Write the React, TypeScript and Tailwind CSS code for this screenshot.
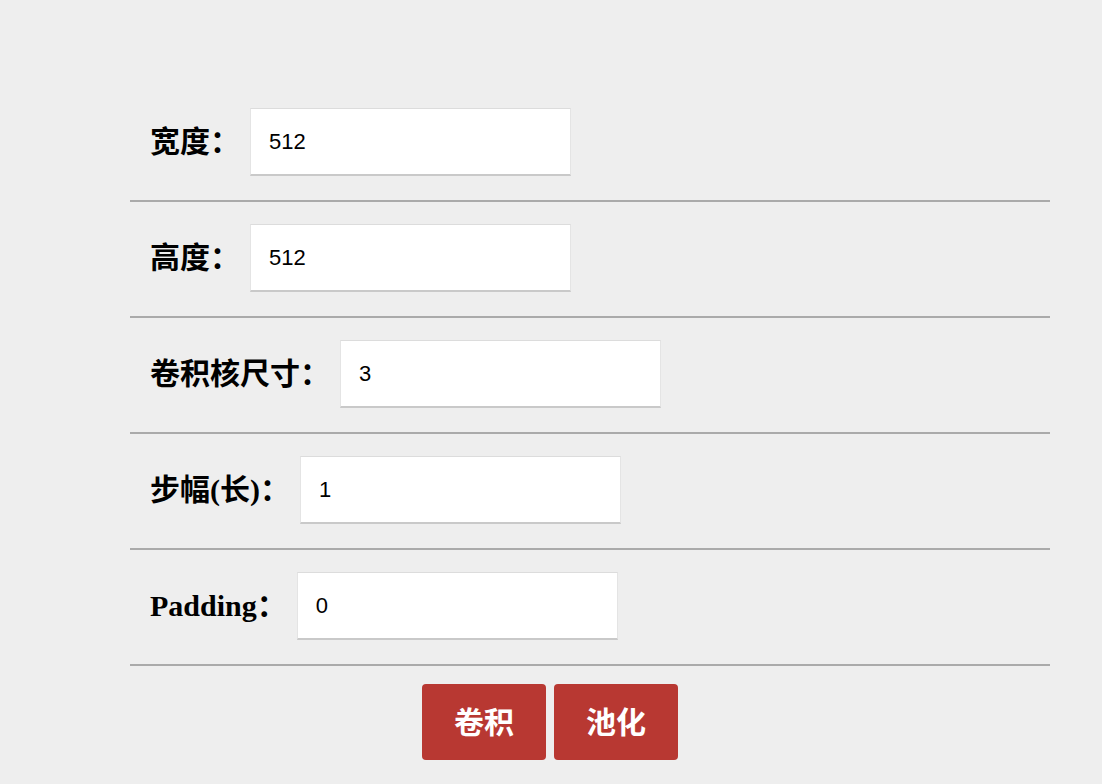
const fields = [
  { label: '宽度', value: '512' },
  { label: '高度', value: '512' },
  { label: '卷积核尺寸', value: '3' },
  { label: '步幅(长)', value: '1' },
  { label: 'Padding', value: '0' },
]

const labelFont = {
  fontFamily: '"Liberation Serif", "Noto Sans CJK SC", serif',
}

const App = () => {
  return (
    <div className="min-h-[784px] w-full bg-[#eeeeee] pt-[86px]">
      <div className="ml-[130px] w-[920px]">
        {fields.map((f) => (
          <div
            key={f.label}
            className="flex h-[116px] items-center border-b-2 border-[#aaaaaa] pb-[2px] pl-5"
          >
            <label
              className="font-['Liberation_Serif','Noto_Sans_CJK_SC',serif] text-[30px] font-bold leading-none text-black"
              style={labelFont}
            >
              {f.label}：
            </label>
            <input
              type="text"
              defaultValue={f.value}
              className="ml-[10px] h-[68px] w-[321px] border border-b-2 border-[#e4e4e4] border-b-[#c9c9c9] border-t-[#dcdcdc] bg-white px-[18px] font-['Liberation_Sans',Arial,sans-serif] text-[22px] text-black outline-none"
            />
          </div>
        ))}
      </div>
      <div className="mt-[18px] flex justify-center gap-2 pr-[2px]">
        <button className="h-[76px] w-[124px] rounded-[4px] bg-[#b83832] font-['Liberation_Serif','Noto_Sans_CJK_SC',serif] text-[30px] font-bold text-white">
          卷积
        </button>
        <button className="h-[76px] w-[124px] rounded-[4px] bg-[#b83832] font-['Liberation_Serif','Noto_Sans_CJK_SC',serif] text-[30px] font-bold text-white">
          池化
        </button>
      </div>
    </div>
  )
}

export default App
